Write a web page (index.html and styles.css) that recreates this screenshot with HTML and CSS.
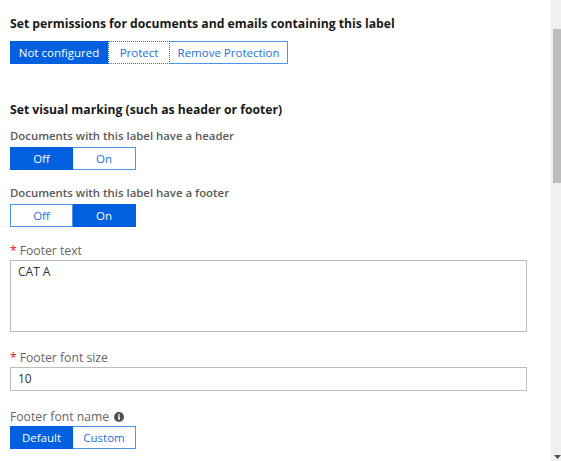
FILE: index.html
```html
<!DOCTYPE html>
<html lang="en">
  <head>
    <meta charset="UTF-8" />
    <title>Label settings</title>
    <link rel="stylesheet" href="styles.css">
  </head>
  <body>
    <div class="page">
      <div class="content">
        <h2 class="heading first">Set permissions for documents and emails containing this label</h2>
        <div class="toggle">
          <span class="opt active w-98">Not configured</span>
          <span class="opt focused w-62">Protect</span>
          <span class="opt w-118">Remove Protection</span>
        </div>

        <h2 class="heading second">Set visual marking (such as header or footer)</h2>
        <div class="sub-label">Documents with this label have a header</div>
        <div class="toggle">
          <span class="opt active w-63">Off</span>
          <span class="opt w-63">On</span>
        </div>

        <div class="sub-label next">Documents with this label have a footer</div>
        <div class="toggle">
          <span class="opt w-63">Off</span>
          <span class="opt active w-63">On</span>
        </div>

        <div class="field-label footer-text"><span class="req">*</span>Footer text</div>
        <div class="text-box tall">CAT A</div>

        <div class="field-label font-size"><span class="req">*</span>Footer font size</div>
        <div class="text-box">10</div>

        <div class="field-label font-name">Footer font name
          <svg class="info" width="10" height="10" viewBox="0 0 10 10">
            <circle cx="5" cy="5" r="5" fill="#505050" />
            <rect x="4.2" y="4.2" width="1.6" height="3.6" fill="#fff" />
            <rect x="4.2" y="2.1" width="1.6" height="1.5" fill="#fff" />
          </svg>
        </div>
        <div class="toggle">
          <span class="opt active w-63">Default</span>
          <span class="opt w-63">Custom</span>
        </div>
      </div>

      <div class="scrollbar">
        <div class="thumb"></div>
        <svg class="arrow" width="7" height="4" viewBox="0 0 7 4"><path d="M0 0H7L3.5 4Z" fill="#505050" /></svg>
      </div>
    </div>
  </body>
</html>
```

FILE: styles.css
```css
body {
  margin: 0;
  font-family: "Open Sans", "Noto Sans", sans-serif;
  background: #fff;
  color: #333;
  overflow: hidden;
}

.page {
  display: flex;
  height: 461px;
}

.content {
  flex: 1;
  padding: 0 24px 0 10px;
}

.heading {
  margin: 0;
  font-size: 12.2px;
  line-height: 18px;
  font-weight: 700;
  color: #1a1a1a;
  white-space: nowrap;
}

.heading.first {
  padding-top: 15px;
  margin-bottom: 8px;
}

.heading.second {
  margin-top: 37px;
  margin-bottom: 9px;
}

.sub-label {
  font-size: 11.4px;
  line-height: 16px;
  font-weight: 600;
  color: #595959;
  margin-bottom: 3px;
  white-space: nowrap;
}

.sub-label.next {
  margin-top: 15px;
}

.toggle {
  display: flex;
  height: 23px;
}

.opt {
  box-sizing: border-box;
  display: flex;
  align-items: center;
  justify-content: center;
  height: 23px;
  border: 1px solid #4f94e8;
  border-left-width: 0;
  font-size: 11.5px;
  color: #1f6fdc;
  background: #fff;
  white-space: nowrap;
}

.opt:first-child {
  border-left-width: 1px;
}

.opt.active {
  background: #0060df;
  border-color: #0060df;
  color: #fff;
}

.opt.focused {
  border: 1px dotted #0a7ae0;
}

.w-98 { width: 98px; }
.w-62 { width: 62px; }
.w-118 { width: 118px; }
.w-63 { width: 63px; }

.field-label {
  display: flex;
  align-items: center;
  font-size: 12.2px;
  line-height: 16px;
  color: #666;
  margin-bottom: 1px;
  white-space: nowrap;
}

.field-label.footer-text {
  margin-top: 16px;
}

.field-label.font-size {
  margin-top: 18px;
}

.field-label.font-name {
  margin-top: 18px;
}

.req {
  color: #e81123;
  margin-right: 3px;
}

.info {
  margin-left: 5px;
}

.text-box {
  box-sizing: border-box;
  height: 24px;
  border: 1px solid #bdbdbd;
  padding: 0 7px;
  font-size: 12px;
  line-height: 22px;
  color: #333;
}

.text-box.tall {
  height: 72px;
}

.scrollbar {
  flex: none;
  width: 10px;
  background: #f0f0f0;
  display: flex;
  flex-direction: column;
  align-items: flex-end;
  padding-top: 29px;
  box-sizing: border-box;
}

.thumb {
  width: 8px;
  height: 154px;
  background: #bdbdbd;
}

.arrow {
  margin-top: auto;
  margin-bottom: 2px;
}
```
